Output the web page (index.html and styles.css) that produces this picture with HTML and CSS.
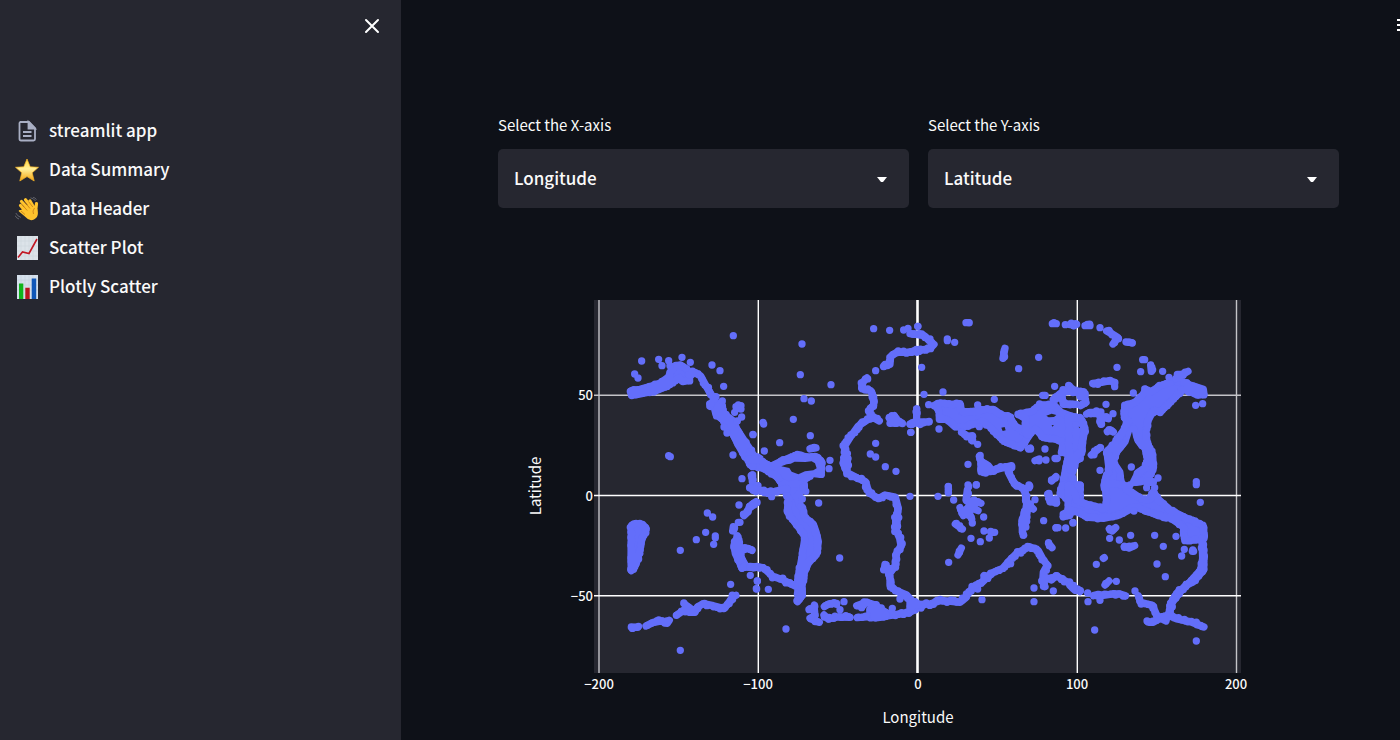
FILE: index.html
```html
<!DOCTYPE html>
<html lang="en">
	<head>
		<meta charset="UTF-8" />
		<meta name="viewport" content="width=device-width, initial-scale=1.0" />
		<title>Plotly Scatter</title>
		<link rel="stylesheet" href="styles.css">
		<script src="script.js" defer></script>
	</head>
	<body>
		<aside class="sidebar">
			<button type="button" class="close" aria-label="Close sidebar">
				<svg viewBox="0 0 16 16"><path d="M2 2 14 14M14 2 2 14" /></svg>
			</button>
			<nav class="pages">
				<a href="#app">
					<svg viewBox="0 0 24 24">
						<path d="M5 3h9l6 6v11q0 1.500-1.500 1.500H6Q4.500 21.500 4.500 20V4Q4.500 3 6 3Z" fill="none" stroke="#a9afc4" stroke-width="1.800" />
						<path d="M13.500 3v6.500H20ZM8 13h8.500M8 17h8.500" fill="#a9afc4" stroke="#a9afc4" stroke-width="1.800" />
					</svg>
					<span>streamlit app</span>
				</a>
				<a href="#summary">
					<svg viewBox="0 0 24 24">
						<defs>
							<linearGradient id="gold" x2="0" y2="1">
								<stop stop-color="#ffd63a" />
								<stop offset=".45" stop-color="#fff09a" />
								<stop offset="1" stop-color="#f5a50f" />
							</linearGradient>
						</defs>
						<path d="M12 1 15.200 8.800 23.500 9.300 17.200 14.800 19.200 23 12 18.600 4.800 23 6.800 14.800.5 9.300 8.800 8.800Z" fill="url(#gold)" stroke="#f7b526" stroke-width=".7" stroke-linejoin="round" />
					</svg>
					<span>Data Summary</span>
				</a>
				<a href="#header">
					<svg viewBox="0 0 24 24">
						<g fill="none" stroke="#ffc32d" stroke-width="3.200" stroke-linecap="round">
							<path d="M5.500 8.500 12 16M6.500 4.500 14 13M10.500 2.800 17 11M15 4 19 11M21.500 6.500 20.500 15" />
						</g>
						<path d="M6 13 12 8 19 9 22.300 12Q24.500 20 19 22.500 14.500 24.800 10.500 20L4 14.500Q3 12.500 6 13Z" fill="#ffc32d" />
						<path d="M7 7.500 12.200 13.500M9.500 4.800 15 11.500M13.500 4.500 17.800 10M6 14 10 17.500M19.500 11Q17 14 18.500 17" fill="none" stroke="#c77b16" stroke-width=".8" />
						<path d="M15.500.8Q19 1.500 20.500 4M17.800 0Q20 .8 21.500 2.500M.8 16Q2.500 19.500 5.800 20.300M0 18.500Q1.500 21.500 4 22" fill="none" stroke="#696a72" stroke-width=".9" />
					</svg>
					<span>Data Header</span>
				</a>
				<a href="#scatter">
					<svg viewBox="0 0 24 24">
						<path d="M2 0h21v24H2Z" fill="#dce3e9" />
						<path d="M6 0v24M10 0v24M14 0v24M18 0v24M2 5h21M2 10h21M2 15h21M2 20h21" stroke="#c8d2da" stroke-width=".5" />
						<path d="M3 21.500 7.500 16 14 17.500 22 3" fill="none" stroke="#c21723" stroke-width="1.600" />
					</svg>
					<span>Scatter Plot</span>
				</a>
				<a href="#plotly">
					<svg viewBox="0 0 24 24">
						<path d="M2 0h21v24H2Z" fill="#d5e0ec" />
						<path d="M6 0v24M10 0v24M14 0v24M18 0v24M2 5h21M2 10h21M2 15h21" stroke="#c0ceda" stroke-width=".5" />
						<path d="M4 8.500h4.300V24H4Z" fill="#0fb51c" />
						<path d="M10.300 12.800h4.400V24h-4.400Z" fill="#b9161f" />
						<path d="M16.700 3.500h4.500V24h-4.500Z" fill="#1057b8" />
					</svg>
					<span>Plotly Scatter</span>
				</a>
			</nav>
		</aside>

		<main class="content">
			<button type="button" class="menu" aria-label="Menu"><i></i><i></i><i></i></button>
			<form class="axes">
				<div class="field">
					<label for="x-axis">Select the X-axis</label>
					<div class="select">
						<select id="x-axis"><option>Longitude</option><option>Latitude</option></select>
						<svg class="caret" viewBox="0 0 10 6"><path d="M0 0h10L6 5H4Z" /></svg>
					</div>
				</div>
				<div class="field">
					<label for="y-axis">Select the Y-axis</label>
					<div class="select">
						<select id="y-axis"><option>Latitude</option><option>Longitude</option></select>
						<svg class="caret" viewBox="0 0 10 6"><path d="M0 0h10L6 5H4Z" /></svg>
					</div>
				</div>
			</form>

			<svg class="chart" viewBox="498 290 841 450" role="img" aria-label="Scatter plot of latitude against longitude">
				<rect class="plot-bg" x="594" y="300" width="647" height="373" />
				<g class="grid">
					<path class="soft" d="M599 300V673M1236.500 300V673M594 395.300H1241" />
					<path d="M758.300 300V673M1077.300 300V673M594 495.500H1241M594 595.800H1241" />
					<path class="zero" d="M917.500 300V673" />
				</g>

				<!-- points, split in eight tiles drawn at 3x -->
				<g class="points" transform="translate(590 295) scale(.3333)">
					<path class="area" d="M124 287 150 283 180 275 210 265 235 247 242 230 258 212 272 210 290 222 300 240 298 256 278 260 268 248 232 273 195 288 140 299 124 299Z" />
					<path class="area" d="M372 335 395 325 400 355 430 378 442 405 475 455 490 482 510 490 510 502 485 503 465 485 445 450 420 400 400 375 378 358Z" />
					<path d="M295 238 312 232 332 243 352 280 368 305 378 305 360 334M430 122h0M155 198h0M206 193h0M216 212h0M236 197h0M240 212h0M276 187h0M301 202h0M366 210h0M390 227h0M401 274h0M134 237h0M144 249h0M489 418h0M429 480h0M456 551h0M236 482h0M241 485h0M487 513h0M411 414h0M402 396h0M397 318h0M438 335h0M445 330h0M453 332h0M453 342h0M434 352h0M455 366h0M442 378h0M487 540v20M502 572h0" />
				</g>
				<g class="points" transform="translate(590 485) scale(.3333)">
					<path class="area" d="M124 122 132 118 158 118 169 131 155 165 148 200 139 235 124 257 123 230Z" />
					<path class="area" d="M442 155 432 180 436 205 450 235 456 250 468 244 452 215 448 180Z" />
					<path d="M498 50 478 65 472 82 462 92M450 112h-5M430 125 428 138M462 194 474 190 486 196M456 248 485 245 510 248M490 8 498 20M124 426 143 427M168 423 188 413 215 408 232 415 238 406M262 389 283 375 298 382 315 382 323 365 340 356 370 362 402 371 418 350 430 333 438 331M283 357 300 369M352 84h0M368 96h0M347 142h0M319 164h0M376 153h0M376 158h0M371 178h0M271 196h0M447 60h0M422 298h0M481 271h0M502 288h0M499 311h0M271 496h0" />
				</g>
				<g class="points" transform="translate(750 295) scale(.3333)">
					<path class="area" d="M-5 490 25 493 62 515 92 500 120 488 148 480 170 486 200 486 215 500 213 538 185 535 160 558 160 572 100 572 80 545 40 520 0 510Z" />
					<path class="area" d="M422 187 418 205 400 214 405 208 420 208 421 195Z" />
					<path d="M510 165 470 172 440 172 425 182M351 249 335 265 337 282 362 287 371 306 371 330 357 346 362 363 388 378M362 368 325 393 302 425 285 452 287 482 279 504 292 533 322 549 346 560 350 575M283 450 292 500 290 530M418 370 433 362 440 375 455 383 420 385M487 388 500 378 510 388M490 118h20M156 147h0M151 239h0M243 269h0M162 311h0M184 318h0M130 373h0M39 382h0M41 387h0M9 419h0M89 443h0M181 422h0M371 101h0M419 106h0M461 105h0M474 100h0M503 94h0M377 227h0M377 445h0M361 477h0M377 486h0M406 515h0M438 529h0M500 342h0M500 368h0M240 496h0M237 521h0M43 468h0M482 412h0M180 462 198 459M0 470h0M8 515h0M8 540v18M24 572h0" />
					<path class="hole" d="M94 514 110 508 122 506 134 500 166 501 185 499 195 505 200 520 190 526 165 529 145 538 125 530 118 519Z" />
				</g>
				<g class="points" transform="translate(750 485) scale(.3333)">
					<path class="area" d="M98-2 158-2 152 20 140 35 150 62 158 68 162 95 190 118 198 140 205 170 200 205 175 235 162 265 156 300 157 330 143 350 146 320 143 285 149 255 158 205 165 155 148 130 124 98 112 80 115 40Z" />
					<path d="M0 244 40 248 70 275 95 283 135 303M10 55 0 68M0 8 30 18 65 22 90 15 110 10M348 0 360 25 385 41 405 30 436 36 445 70 437 105 438 135 449 160 453 182 440 205 435 242 420 265 420 300 438 317 470 330 490 352 510 362M444 70 440 130M405 238 403 252 425 250M450 342h0M177 374 190 372 193 360M193 372 195 392 180 400 208 412M223 365 238 356 260 355M222 390 235 402 265 396 300 397M322 398 360 395 400 395 440 388 480 382 510 365M320 362 350 352 375 360 395 375 420 390M335 368h0M427 370h0M360 372 390 390M10 10h0M65 35h0M157 42h0M152 65h0M163 0v15M206 54h0M269 219h0M108 432h0M22 288h0M20 312h0M55 313h0M5 195h0M282 350h0M270 374h0" />
					<path class="area" d="M375 360 390 375 410 390 400 396 370 396 380 390 370 375Z" />
				</g>
				<g class="points" transform="translate(910 295) scale(.3333)">
					<path class="area" d="M75 330 88 325 122 328 150 326 155 350 185 350 215 345 250 343 275 360 298 365 315 392 340 410 362 415 345 440 332 458 290 443 262 420 240 395 220 380 190 388 160 395 135 395 110 373 88 373 88 350Z" />
					<path class="area" d="M326 358 365 350 390 330 432 330 452 352 488 365 510 370 510 490 492 500 492 515 485 540 490 572 460 562 468 515 478 480 455 470 460 442 430 430 400 428 376 400 352 420 345 400 347 372Z" />
					<path d="M0 116 18 118 42 122 55 135 72 148 60 160 0 172M0 388 20 380 57 381M430 313 448 298 466 285 487 290 500 290M455 300 460 328 480 327 500 328M208 484 213 500 213 530 240 530 265 522 305 512 295 532 307 555 320 573M215 500 235 512 245 525M155 412 170 422 188 425 185 436M285 160 282 175 279 190M427 86h12M487 88h13M168 83h7M112 132v5M398 301h4M375 497 388 492M435 490h7M425 558 438 545M355 462 361 459M466 89h0M134 142h0M24 94h0M35 217h0M42 298h0M99 291h0M56 329h0M253 313h0M203 330h0M87 402h0M208 395h0M20 342v20M174 508h0M203 448h0M386 187h0M326 221h0M434 274h0M476 271h0M405 462h0M408 495h0M115 574h0M174 570h0M199 569h0M358 573h0M3 412h0" />
					<path class="hole" d="M274 398 284 396 287 406 278 408ZM409 362 425 356 439 360 432 366 416 367ZM425 390 432 391 427 395Z" />
				</g>
				<g class="points" transform="translate(910 485) scale(.3333)">
					<path class="area" d="M458 0 510 0 510 62 490 55 465 35 450 25Z" />
					<path d="M320 0 345 12 348 50 370 72M357 0v8M350 65 337 105 337 140 341 150M350 75 345 125M172 15 168 45 185 60 195 73 204 77M188 48 213 55M150 68 160 92M172 70 185 102M0 365 30 358 60 357 95 346 150 352 165 340 190 305 218 290 250 262 278 250 300 225 320 205 358 185 385 197 400 225 412 240 400 262 398 290 405 305M400 275 425 285 438 272 470 290 510 320M0 375V350M222 272 230 280M203 312h0M302 236h0M417 25 420 50 440 53 435 42M475 60 480 90 460 95 465 85M144 210 154 189M136 117 157 132M243 142h11M416 176 426 188M438 128h6M115 5v18M372 350h0M84 34h0M131 45h0M176 5h0M199 0h0M221 96h0M187 114h0M222 138h0M238 159h0M183 160h0M211 170h0M116 232h0M0 34h0M401 107h0M467 129h0M216 344h0M372 309h0M430 318h0M375 44h0M489 114h0" />
				</g>
				<g class="points" transform="translate(1070 295) scale(.3333)">
					<path class="area" d="M165 332 195 322 218 300 228 283 240 292 272 272 320 255 335 260 360 270 400 283 402 298 385 300 340 282 325 298 295 325 272 350 250 345 235 375 227 410 232 445 248 480 250 515 243 538 215 560 190 562 205 532 225 518 233 490 225 460 205 438 188 398 175 430 142 468 130 500 150 528 153 572 102 572 108 545 118 530 112 480 110 470 135 445 165 400 175 375 163 368Z" />
					<path class="area" d="M-5 365 32 370 45 400 38 440 35 475 14 482 14 512 0 525Z" />
					<path d="M0 89 15 90M110 108 125 116 143 127 140 133 129 147M45 92h15M168 141 186 143M354 229 338 238 322 238 322 260M68 265 95 262 120 257 133 262 134 275M0 275 8 292 22 290 40 290 45 300 30 305M48 322 32 332M40 302 48 322M8 328h0M50 357 60 352 90 352 93 388M90 365 115 371M112 410 122 405 130 411M64 480 90 458M242 210 244 229M218 194h6M230 562h20M141 217h0M108 328h0M129 356h0M190 294h0M212 230h0M278 229h0M297 247h0M377 331h0M398 326h0M184 516h0M264 549h0M379 560h0M90 526h0M90 98h0" />
					<path class="hole" d="M186 410 192 441 203 453 215 475 221 493 210 513 195 522 178 545 163 550 160 527 145 505 148 481 175 445ZM26 395 30 396 28 400Z" />
					<path d="M184 516h0" />
				</g>
				<g class="points" transform="translate(1070 485) scale(.3333)">
					<path class="area" d="M-5 0 12 20 20 45 50 58 105 72 110 50 105-2 158-2 180 18 215 42 240 45 250 20 264 42 300 75 355 102 385 115 401 126 402 160 380 165 345 166 340 125 300 98 265 92 230 77 195 65 148 90 100 100 55 97 20 80-5 75Z" />
					<path class="area" d="M396 160 402 210 401 255 370 290 345 303 322 332 305 355 298 388 302 355 320 325 350 302 392 255 398 220Z" />
					<path d="M300 388 320 402 360 410 402 426M205 332 212 352 248 362 262 395 288 408M235 411 250 412 275 395 295 395M307 365h0M70 332 85 328 100 331 130 327 150 327 167 332M0 302 15 316 30 317M118 131 127 138 137 128M163 184 177 189 194 182M367 199h4M117 288 105 300M100 220 103 218M119 160h0M148 165h0M182 151h0M254 151h0M318 154h0M280 184h0M343 193h0M335 213h0M391 52h0M79 238h0M261 237h0M286 275h0M139 289h0M53 324h0M54 350h0M90 346h0M74 435h0M379 468h0M379-1h0M230 8h0M254 8h0M192 78h0M9 112h0M195 318h0M180 0h0" />
				</g>

				<g class="ticks">
					<text x="599" y="689">−200</text>
					<text x="758" y="689">−100</text>
					<text x="918" y="689">0</text>
					<text x="1077" y="689">100</text>
					<text x="1236" y="689">200</text>
				</g>
				<g class="ticks left">
					<text x="593" y="400">50</text>
					<text x="593" y="501">0</text>
					<text x="593" y="601">−50</text>
				</g>
				<text class="title" x="918" y="723">Longitude</text>
				<text class="title" transform="translate(541 486) rotate(-90)">Latitude</text>
			</svg>
		</main>
	</body>
</html>
```
FILE: styles.css
```css
* {
	box-sizing: border-box;
}
body {
	display: flex;
	margin: 0;
	min-height: 100vh;
	background-color: #0e1118;
	color: #fafafa;
	font-family: 'Noto Sans CJK SC', 'Noto Sans', sans-serif;
	font-weight: 500;
	overflow: hidden;
}
button {
	padding: 0;
	border: 0;
	background: none;
	color: inherit;
	cursor: pointer;
}
.sidebar {
	display: flex;
	flex: 0 0 401px;
	flex-direction: column;
	padding: 18px 21px 0 15px;
	background-color: #262730;
}
.close {
	align-self: flex-end;
	width: 16px;
	height: 16px;
}
.close svg {
	display: block;
	fill: none;
	stroke: #fff;
	stroke-width: 2;
	stroke-linecap: round;
}
.pages {
	display: flex;
	flex-direction: column;
	margin-top: 77px;
}
.pages a {
	display: flex;
	align-items: center;
	gap: 10px;
	height: 39px;
	color: inherit;
	font-size: 17px;
	line-height: 24px;
	text-decoration: none;
}
.pages span {
	padding-bottom: 2px;
}
.pages svg {
	width: 24px;
	height: 24px;
}
.content {
	position: relative;
	flex: 1;
	min-width: 0;
	padding: 113px 61px 0 97px;
}
.menu {
	position: absolute;
	top: 19px;
	right: -1px;
	display: grid;
	gap: 3px;
	width: 4px;
}
.menu i {
	height: 2px;
	background-color: #fff;
}
.axes {
	display: flex;
	gap: 19px;
}
.field {
	flex: 1;
}
.field label {
	display: block;
	font-size: 15px;
	font-weight: 400;
	line-height: 24px;
}
.select {
	position: relative;
	margin-top: 12px;
}
.select select {
	display: block;
	width: 100%;
	height: 59px;
	padding: 0 16px 3px;
	border: 0;
	border-radius: 5px;
	appearance: none;
	background-color: #262730;
	color: inherit;
	font: inherit;
	font-size: 17px;
}
.caret {
	position: absolute;
	top: 28px;
	right: 22px;
	width: 10px;
	height: 6px;
	fill: #fff;
	pointer-events: none;
}
.chart {
	display: block;
	width: 100%;
	margin-top: 82px;
}
.plot-bg,
.hole {
	fill: #262730;
}
.grid path {
	fill: none;
	stroke: #fff;
	stroke-width: 1.4;
}
.grid .soft {
	stroke: #c4c4c8;
}
.grid .zero {
	stroke-width: 2.6;
}
.points path {
	fill: none;
	stroke: #636efa;
	stroke-width: 22;
	stroke-linecap: round;
	stroke-linejoin: round;
}
.points .area {
	fill: #636efa;
}
.points .hole {
	fill: #262730;
	stroke: none;
}
.chart text {
	fill: #fafafa;
	text-anchor: middle;
}
.ticks text {
	font-size: 13px;
}
.chart .left text {
	text-anchor: end;
}
.chart .title {
	font-size: 15px;
	font-weight: 400;
}
```
FILE: script.js
```js
// roughen the point belts with single points scattered along each path
let seed = 7
function random() {
	seed = (seed * 16807) % 2147483647
	return seed / 2147483647
}
for (const path of document.querySelectorAll('.points path:not(.hole)')) {
	const spread = path.classList.contains('area') ? 6 : 9
	const length = path.getTotalLength()
	let d = ''
	for (let at = 0; at < length; at += 9) {
		const { x, y } = path.getPointAtLength(at)
		const dx = (random() - 0.5) * spread
		const dy = (random() - 0.5) * spread
		d += `M${(x + dx).toFixed(1)} ${(y + dy).toFixed(1)}h0`
	}
	if (!d) continue
	const dots = document.createElementNS('http://www.w3.org/2000/svg', 'path')
	dots.setAttribute('d', d)
	path.after(dots)
}
```
